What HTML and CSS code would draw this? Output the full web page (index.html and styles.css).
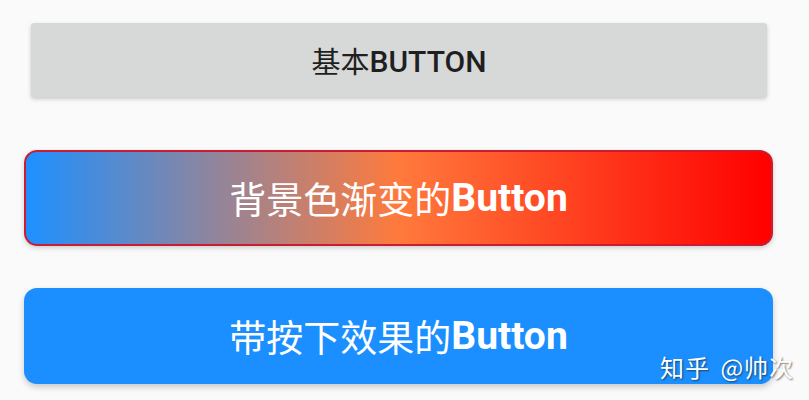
FILE: index.html
```html
<!DOCTYPE html>
<html lang="zh-CN">
<head>
    <meta charset="UTF-8">
    <meta name="viewport" content="width=device-width, initial-scale=1.0">
    <title>Button 示例</title>
    <link rel="stylesheet" href="styles.css">
</head>
<body>
    <div class="screen">
        <button class="btn btn-basic">基本<span class="latin">BUTTON</span></button>
        <button class="btn btn-gradient">背景色渐变的<span class="latin">Button</span></button>
        <button class="btn btn-press">带按下效果的<span class="latin">Button</span></button>

        <!-- watermark over the bottom corner -->
        <div class="watermark">知乎 @帅次</div>
    </div>
</body>
</html>
```
FILE: styles.css
```css
/* General Reset */
* {
    margin: 0;
    padding: 0;
    box-sizing: border-box;
}

body {
    background: #fafafa;
    width: 809px;
    height: 400px;
    overflow: hidden;
    font-family: 'Noto Sans CJK SC', 'Noto Sans', sans-serif;
}

.screen {
    position: relative;
    height: 400px;
    display: flex;
    flex-direction: column;
}

.btn {
    display: flex;
    align-items: center;
    justify-content: center;
    border: none;
    font-family: 'Noto Sans CJK SC', 'Noto Sans', sans-serif;
    font-weight: normal;
    cursor: pointer;
}

.latin {
    font-family: Roboto, 'Noto Sans', sans-serif;
    font-weight: 500;
}

.btn-basic {
    margin: 23px 42px 0 31px;
    height: 74px;
    background: #d7d8d8;
    color: #1f1f1f;
    font-size: 29px;
    border-radius: 3px;
    box-shadow: 0 2px 4px rgba(0, 0, 0, 0.2);
}

.btn-basic .latin {
    font-size: 30px;
    padding-top: 2px;
}

.btn-gradient {
    margin: 53px 36px 0 24px;
    height: 96px;
    background: linear-gradient(to right, #1e90ff 0%, #ff7a3c 50%, #ff0000 100%);
    border: 2px solid #c81d33;
    border-radius: 13px;
    color: #ffffff;
    font-size: 37px;
    box-shadow: 0 2px 5px rgba(0, 0, 0, 0.18);
}

.btn-press {
    margin: 42px 36px 0 24px;
    height: 96px;
    background: #1b8fff;
    border-radius: 13px;
    color: #ffffff;
    font-size: 37px;
    box-shadow: 0 3px 6px rgba(0, 0, 0, 0.2);
}

.btn-gradient .latin, .btn-press .latin {
    font-size: 39px;
    font-weight: 700;
}

.watermark {
    position: absolute;
    left: 660px;
    top: 349px;
    color: #ffffff;
    font-size: 24px;
    letter-spacing: 1px;
    word-spacing: 4px;
    text-shadow: 1px 1px 2px rgba(0, 0, 0, 0.55);
}
```
